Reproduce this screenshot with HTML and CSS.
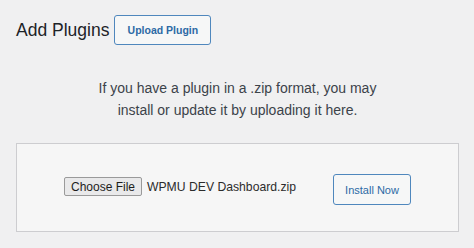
FILE: index.html
```html
<!DOCTYPE html>
<html lang="en">
<head>
<meta charset="utf-8">
<title>Add Plugins</title>
<link rel="stylesheet" href="styles.css">
</head>
<body>
<div class="wrap">
  <div class="header">
    <h1 class="title">Add Plugins</h1>
    <a class="title-action" href="#">Upload Plugin</a>
  </div>
  <p class="help">If you have a plugin in a .zip format, you may<br>install or update it by uploading it here.</p>
  <form class="upload-form">
    <div class="file-group">
      <button type="button" class="choose-file">Choose File</button>
      <span class="file-name">WPMU DEV Dashboard.zip</span>
    </div>
    <button type="button" class="install">Install Now</button>
  </form>
</div>
</body>
</html>
```
FILE: styles.css
```css
html, body {
  margin: 0;
  padding: 0;
  background: #f0f0f1;
}
body {
  font-family: "Liberation Sans", Arial, sans-serif;
  color: #3c434a;
  width: 474px;
  height: 248px;
  overflow: hidden;
}
.wrap {
  padding: 15px 15px 0 16px;
}
.header {
  display: flex;
  align-items: center;
  gap: 5px;
  height: 30px;
}
.title {
  margin: 0;
  font-size: 17.5px;
  font-weight: 400;
  color: #1d2327;
  line-height: 30px;
}
.title-action {
  box-sizing: border-box;
  height: 30px;
  width: 97px;
  display: flex;
  align-items: center;
  justify-content: center;
  border: 1px solid #4f87bd;
  border-radius: 3px;
  background: #f6f7f7;
  color: #2c6aa5;
  font-size: 10.5px;
  font-weight: 700;
  text-decoration: none;
}
.help {
  margin: 32px 0 0;
  font-size: 14px;
  line-height: 22px;
  text-align: center;
  color: #3c434a;
}
.upload-form {
  box-sizing: border-box;
  margin: 22px 0 0;
  height: 89px;
  border: 1px solid #cdcdd0;
  background: #f6f6f6;
  display: flex;
  align-items: center;
  justify-content: center;
  gap: 37px;
}
.file-group {
  display: flex;
  align-items: center;
  gap: 5px;
  margin-bottom: 2px;
}
.choose-file {
  box-sizing: border-box;
  height: 19px;
  width: 78px;
  padding: 0;
  font-family: "Liberation Sans", Arial, sans-serif;
  font-size: 12px;
  color: #1d1d1d;
  background: #e9e9ea;
  border: 1px solid #9a9a9a;
  border-radius: 2px;
}
.file-name {
  font-size: 12.2px;
  color: #2c2c2c;
}
.install {
  box-sizing: border-box;
  height: 31px;
  width: 78px;
  margin-top: 4px;
  padding: 0;
  font-family: "Liberation Sans", Arial, sans-serif;
  font-size: 11px;
  color: #2c6aa5;
  background: #f6f7f7;
  border: 1px solid #4f87bd;
  border-radius: 3px;
}
```
